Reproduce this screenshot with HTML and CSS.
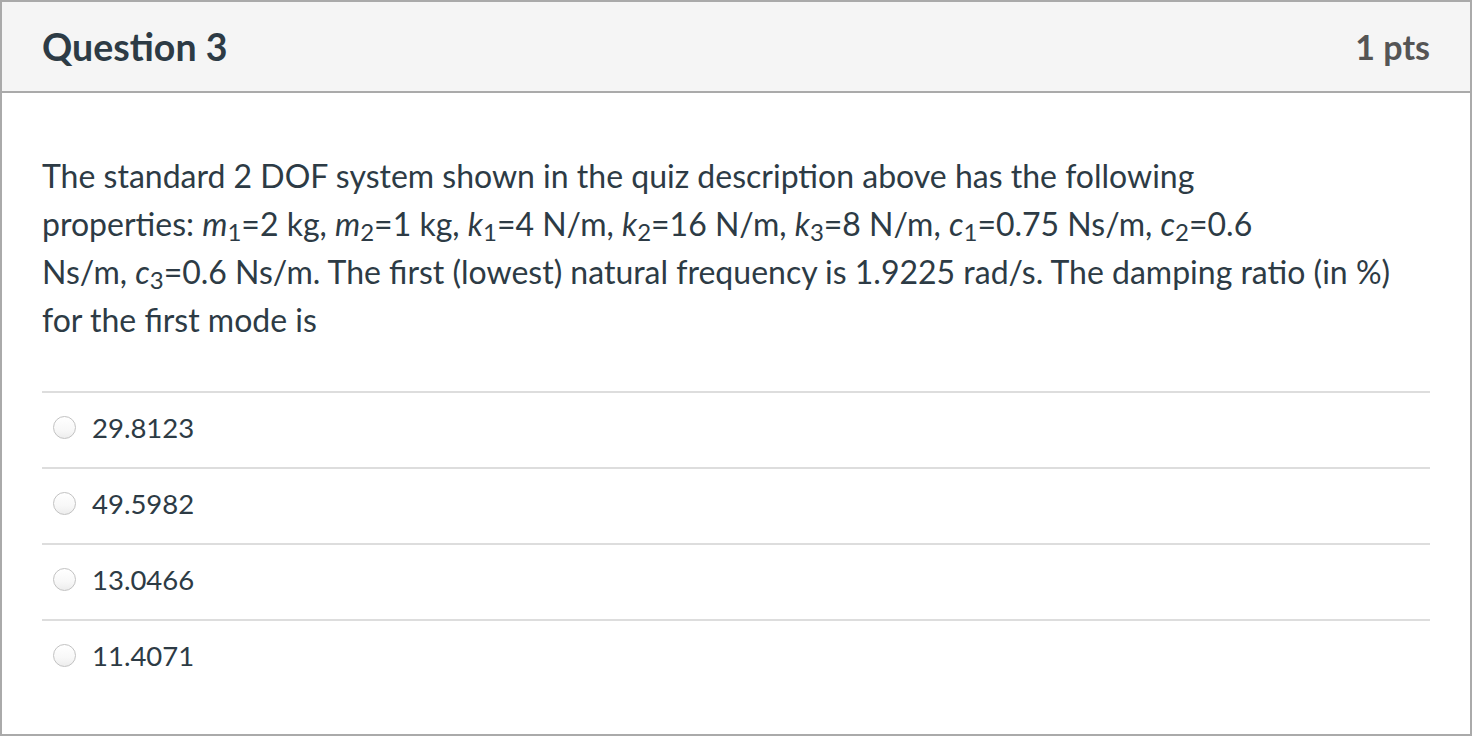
FILE: index.html
```html
<!DOCTYPE html>
<html>
<head>
<meta charset="utf-8">
<link rel="stylesheet" href="styles.css">
</head>
<body>
<div class="question">
  <div class="header">
    <h2 class="title">Question 3</h2>
    <div class="points">1 pts</div>
  </div>
  <div class="content">
    <p class="text">The standard 2 DOF system shown in the quiz description above has the following<br>properties: <i>m</i><sub>1</sub>=2 kg, <i>m</i><sub>2</sub>=1 kg, <i>k</i><sub>1</sub>=4 N/m, <i>k</i><sub>2</sub>=16 N/m, <i>k</i><sub>3</sub>=8 N/m, <i>c</i><sub>1</sub>=0.75 Ns/m, <i>c</i><sub>2</sub>=0.6<br>Ns/m, <i>c</i><sub>3</sub>=0.6 Ns/m. The first (lowest) natural frequency is 1.9225 rad/s. The damping ratio (in %)<br>for the first mode is</p>
    <div class="answers">
      <label class="answer"><span class="radio"></span><span class="label">29.8123</span></label>
      <label class="answer"><span class="radio"></span><span class="label">49.5982</span></label>
      <label class="answer"><span class="radio"></span><span class="label">13.0466</span></label>
      <label class="answer"><span class="radio"></span><span class="label">11.4071</span></label>
    </div>
  </div>
</div>
</body>
</html>
```
FILE: styles.css
```css
html, body {
  margin: 0;
  padding: 0;
  background: #fff;
}
body {
  font-family: Lato, "Liberation Sans", sans-serif;
  color: #2d3b45;
}
.question {
  width: 1472px;
  height: 736px;
  box-sizing: border-box;
  border: 2px solid #aaaaaa;
}
.header {
  height: 91px;
  box-sizing: border-box;
  background: #f5f5f5;
  border-bottom: 2px solid #aaaaaa;
  display: flex;
  align-items: center;
  justify-content: space-between;
  padding: 0 40px 0 40px;
}
.title {
  margin: 0;
  font-size: 37.5px;
  font-weight: 700;
  color: #2d3b45;
}
.points {
  font-size: 34px;
  font-weight: 700;
  color: #555555;
}
.content {
  padding: 59px 40px 0 40px;
}
.text {
  margin: 0 0 47px 0;
  font-size: 32px;
  line-height: 48px;
  white-space: nowrap;
}
.text sub {
  font-size: 0.75em;
  line-height: 0;
  vertical-align: -0.22em;
}
.answers {
  display: flex;
  flex-direction: column;
}
.answer {
  display: flex;
  align-items: center;
  height: 76px;
  box-sizing: border-box;
  border-top: 2px solid #dddddd;
  padding: 0 0 6px 11px;
  gap: 16px;
  font-size: 27.5px;
}
.radio {
  width: 23px;
  height: 23px;
  box-sizing: border-box;
  border-radius: 50%;
  border: 1px solid #c2c2c2;
  background: linear-gradient(#ffffff, #f8f8f8 60%, #ededed);
  flex: none;
}
```
